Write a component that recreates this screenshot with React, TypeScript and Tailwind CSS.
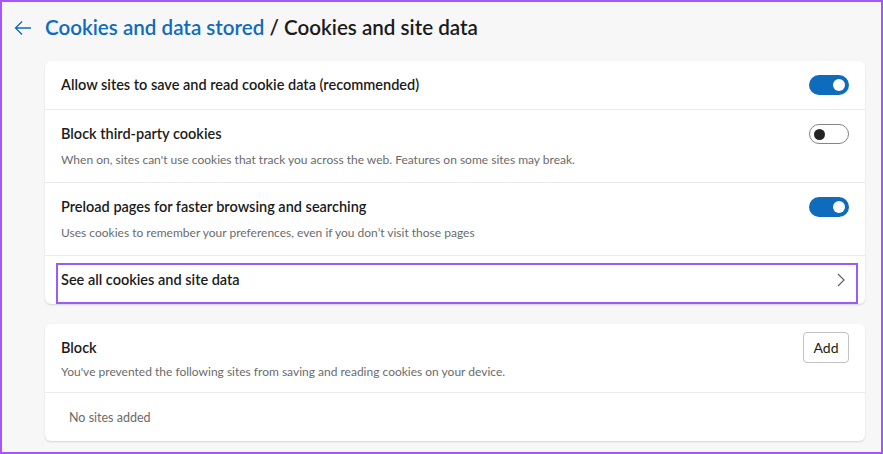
import React from "react";

function Toggle({ on }: { on: boolean }) {
  if (on) {
    return (
      <div className="w-[40px] h-[20px] rounded-full bg-[#0f6cbd] flex items-center justify-end pr-[4px] shrink-0">
        <div className="w-[12px] h-[12px] rounded-full bg-white" />
      </div>
    );
  }
  return (
    <div className="w-[40px] h-[20px] rounded-full border border-[#858585] bg-white flex items-center pl-[4px] shrink-0">
      <div className="w-[11px] h-[11px] rounded-full bg-[#242424]" />
    </div>
  );
}

function ToggleRow({ title, desc, on, last }: { title: string; desc?: string; on: boolean; last?: boolean }) {
  return (
    <div className={"flex items-start justify-between px-[16px] " + (last ? "" : "border-b border-[#ebebeb]")}>
      <div className={desc ? "pt-[14px] pb-[14px]" : "h-[48px] flex items-center"}>
        <div className="text-[14.5px] leading-[20px] font-semibold text-[#1b1b1b]">{title}</div>
        {desc && <div className="mt-[8px] text-[12px] leading-[16px] text-[#6b6b6b]">{desc}</div>}
      </div>
      <div className={desc ? "pt-[14px]" : "h-[48px] flex items-center"}>
        <Toggle on={on} />
      </div>
    </div>
  );
}

export default function App() {
  return (
    <div
      className="w-[883px] h-[454px] border-2 border-[#a855f7] bg-[#f7f7f7] overflow-hidden"
      style={{ fontFamily: "Lato, 'Open Sans', sans-serif" }}
    >
      <div className="h-[52px] flex items-center pl-[12px]">
        <svg width="18" height="16" viewBox="0 0 18 16" fill="none" stroke="#0f6cbd" strokeWidth="1.3">
          <path d="M17 8H1.5M8 1.5L1.5 8L8 14.5" />
        </svg>
        <div className="ml-[13px] -mt-[2px] text-[20.6px] leading-[28px] font-semibold text-[#1b1b1b]">
          <span className="text-[#0f6cbd]">Cookies and data stored</span> / Cookies and site data
        </div>
      </div>

      <div className="ml-[43px] mr-[16px] mt-[7px] bg-white rounded-[6px] shadow-[0_1px_2px_rgba(0,0,0,0.14)]">
        <ToggleRow title="Allow sites to save and read cookie data (recommended)" on={true} />
        <ToggleRow
          title="Block third-party cookies"
          desc="When on, sites can't use cookies that track you across the web. Features on some sites may break."
          on={false}
        />
        <ToggleRow
          title="Preload pages for faster browsing and searching"
          desc="Uses cookies to remember your preferences, even if you don’t visit those pages"
          on={true}
        />
        <div className="h-[48px] pt-[7px] pl-[11px] pr-[7px]">
          <div className="h-full border-2 border-[#9b5cf6] flex items-start justify-between pt-[5px] pl-[3px] pr-[11px]">
            <span className="text-[14.5px] leading-[20px] font-semibold text-[#1b1b1b]">See all cookies and site data</span>
            <svg className="mt-[3px]" width="8" height="14" viewBox="0 0 8 14" fill="none" stroke="#616161" strokeWidth="1.2">
              <path d="M1 1L7 7L1 13" />
            </svg>
          </div>
        </div>
      </div>

      <div className="ml-[43px] mr-[16px] mt-[20px] bg-white rounded-[6px] shadow-[0_1px_2px_rgba(0,0,0,0.14)]">
        <div className="flex items-start justify-between pl-[16px] pr-[16px] pt-[8px] pb-[12px] border-b border-[#ebebeb]">
          <div className="pt-[6px]">
            <div className="text-[14.5px] leading-[20px] font-semibold text-[#1b1b1b]">Block</div>
            <div className="mt-[6px] text-[12px] leading-[16px] text-[#6b6b6b]">
              You've prevented the following sites from saving and reading cookies on your device.
            </div>
          </div>
          <button className="w-[46px] h-[31px] border border-[#c2c2c2] rounded-[4px] bg-white text-[14px] text-[#1b1b1b]">
            Add
          </button>
        </div>
        <div className="h-[48px] flex items-center pl-[24px] pt-[2px] text-[12.5px] text-[#6b6b6b]">No sites added</div>
      </div>
    </div>
  );
}
